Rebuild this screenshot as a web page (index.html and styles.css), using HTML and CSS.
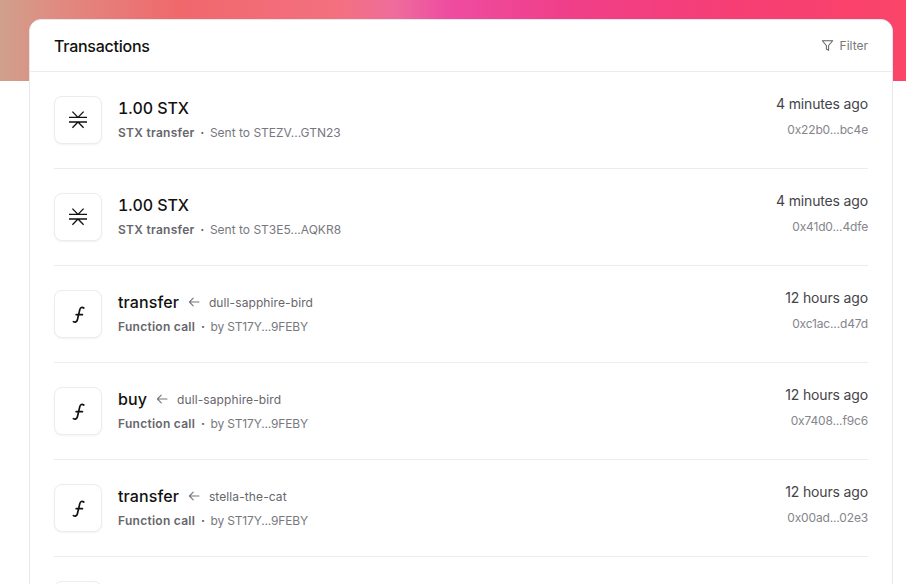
FILE: index.html
```html
<!DOCTYPE html>
<html lang="en">
<head>
<meta charset="utf-8">
<title>Transactions</title>
<link rel="stylesheet" href="styles.css">
</head>
<body>
<svg class="defs" width="0" height="0" aria-hidden="true">
  <symbol id="stx" viewBox="0 0 24 24">
    <path d="M3 9.4H21M3 14H21M6.4 3.6L12 9.4L17.6 3.6M6.4 19.8L12 14L17.6 19.8" fill="none" stroke="currentColor" stroke-width="1.3"/>
  </symbol>
  <symbol id="fn" viewBox="0 0 24 24">
    <path d="M17.8 6C16 4.8 14.4 5.4 13.8 7.6L11.4 17.8C10.9 20 9 20.6 7.4 19.6M10.2 12.7H16.4" fill="none" stroke="currentColor" stroke-width="1.7" stroke-linecap="round"/>
  </symbol>
  <symbol id="funnel" viewBox="0 0 14 14">
    <path d="M1.4 1.9H12.6L8.2 7V12.2L5.8 10.8V7Z" fill="none" stroke="currentColor" stroke-width="1.1" stroke-linejoin="round"/>
  </symbol>
  <symbol id="arrow" viewBox="0 0 14 14">
    <path d="M12 7H2.4M6.2 3.2L2.4 7L6.2 10.8" fill="none" stroke="currentColor" stroke-width="1.1" stroke-linecap="round" stroke-linejoin="round"/>
  </symbol>
</svg>
<div class="page">
  <section class="card">
    <header class="card-head">
      <h1 class="card-title">Transactions</h1>
      <button class="filter" type="button"><svg class="filter-icon"><use href="#funnel"/></svg>Filter</button>
    </header>
    <ul class="list">
      <li class="row">
        <span class="tile"><svg class="tile-icon"><use href="#stx"/></svg></span>
        <div class="info">
          <div class="title"><span class="name amount">1.00 STX</span></div>
          <div class="sub"><strong>STX transfer</strong><span class="dot">∙</span><span>Sent to STEZV...GTN23</span></div>
        </div>
        <div class="meta"><span class="time">4 minutes ago</span><span class="hash">0x22b0...bc4e</span></div>
      </li>
      <li class="row">
        <span class="tile"><svg class="tile-icon"><use href="#stx"/></svg></span>
        <div class="info">
          <div class="title"><span class="name amount">1.00 STX</span></div>
          <div class="sub"><strong>STX transfer</strong><span class="dot">∙</span><span>Sent to ST3E5...AQKR8</span></div>
        </div>
        <div class="meta"><span class="time">4 minutes ago</span><span class="hash">0x41d0...4dfe</span></div>
      </li>
      <li class="row">
        <span class="tile"><svg class="tile-icon"><use href="#fn"/></svg></span>
        <div class="info">
          <div class="title"><span class="name">transfer</span><svg class="arrow"><use href="#arrow"/></svg><span class="contract">dull-sapphire-bird</span></div>
          <div class="sub"><strong>Function call</strong><span class="dot">∙</span><span class="sender">by ST17Y...9FEBY</span></div>
        </div>
        <div class="meta"><span class="time">12 hours ago</span><span class="hash">0xc1ac...d47d</span></div>
      </li>
      <li class="row">
        <span class="tile"><svg class="tile-icon"><use href="#fn"/></svg></span>
        <div class="info">
          <div class="title"><span class="name">buy</span><svg class="arrow"><use href="#arrow"/></svg><span class="contract">dull-sapphire-bird</span></div>
          <div class="sub"><strong>Function call</strong><span class="dot">∙</span><span class="sender">by ST17Y...9FEBY</span></div>
        </div>
        <div class="meta"><span class="time">12 hours ago</span><span class="hash">0x7408...f9c6</span></div>
      </li>
      <li class="row">
        <span class="tile"><svg class="tile-icon"><use href="#fn"/></svg></span>
        <div class="info">
          <div class="title"><span class="name">transfer</span><svg class="arrow"><use href="#arrow"/></svg><span class="contract">stella-the-cat</span></div>
          <div class="sub"><strong>Function call</strong><span class="dot">∙</span><span class="sender">by ST17Y...9FEBY</span></div>
        </div>
        <div class="meta"><span class="time">12 hours ago</span><span class="hash">0x00ad...02e3</span></div>
      </li>
      <li class="row">
        <span class="tile"></span>
        <div class="info"></div>
        <div class="meta"><span class="time">12 hours ago</span></div>
      </li>
    </ul>
  </section>
</div>
</body>
</html>
```
FILE: styles.css
```css
* { box-sizing: border-box; }
html, body { margin: 0; height: 100%; overflow: hidden; background: #fff; }
body { font-family: Inter, "Liberation Sans", sans-serif; color: #111; }
.defs { position: absolute; }
.page {
  height: 100%;
  padding: 19px 13px 0 29px;
  background:
    linear-gradient(90deg, #d0a08c 0, #e08a80 60px, #f0686c 180px, #f47080 340px, #ee6c9c 395px, #ee4ca0 450px, #f03e88 570px, #f63e74 740px, #fb4468 906px) 0 0 / 100% 81px no-repeat;
}
.card {
  background: #fff;
  border: 1px solid #e8e8ec;
  border-radius: 12px;
  height: 640px;
  overflow: hidden;
}
.card-head {
  display: flex;
  align-items: center;
  justify-content: space-between;
  height: 52px;
  padding: 0 24px;
  border-bottom: 1px solid #ececef;
}
.card-title { margin: 0; font-size: 16px; font-weight: 500; line-height: 24px; letter-spacing: -0.25px; color: #111; }
.filter {
  display: flex;
  align-items: center;
  gap: 6px;
  padding: 0;
  border: 0;
  background: none;
  font: 400 12px/16px Inter, "Liberation Sans", sans-serif;
  color: #77777d;
}
.filter-icon { width: 13px; height: 13px; color: #5f5f66; }
.list { list-style: none; margin: 0 24px; padding: 0; }
.row {
  display: flex;
  align-items: flex-start;
  gap: 16px;
  height: 97px;
  padding-top: 24px;
  border-bottom: 1px solid #ececef;
}
.row:last-child { border-bottom: 0; }
.tile {
  display: flex;
  align-items: center;
  justify-content: center;
  flex: none;
  width: 48px;
  height: 48px;
  border: 1px solid #ececef;
  border-radius: 8px;
  background: #fff;
  box-shadow: 0 1px 2px rgba(0, 0, 0, 0.05);
  color: #111;
}
.tile-icon { width: 24px; height: 24px; }
.info { flex: 1; display: flex; flex-direction: column; gap: 5px; }
.title { display: flex; align-items: center; height: 24px; }
.name { font-size: 16px; font-weight: 500; line-height: 24px; letter-spacing: 0.1px; color: #111; }
.amount { font-variant-numeric: tabular-nums; letter-spacing: -0.1px; }
.arrow { width: 14px; height: 14px; margin: 0 8px; color: #77777d; }
.contract { font-size: 12px; font-weight: 400; letter-spacing: 0.1px; color: #66666c; }
.sub { display: flex; align-items: center; font-size: 12px; line-height: 16px; color: #77777d; }
.sub strong { font-weight: 600; letter-spacing: 0.27px; color: #66666c; }
.sender { letter-spacing: -0.17px; }
.dot { margin: 0 6px; font-weight: 700; color: #55555b; }
.meta { display: flex; flex-direction: column; align-items: flex-end; gap: 4px; }
.time { font-size: 14px; line-height: 20px; letter-spacing: -0.15px; color: #444449; margin-top: -2px; }
.row:last-child .time { margin-top: -1px; }
.hash { font-size: 12px; line-height: 16px; letter-spacing: -0.15px; color: #85858b; margin-top: 4px; }
```
